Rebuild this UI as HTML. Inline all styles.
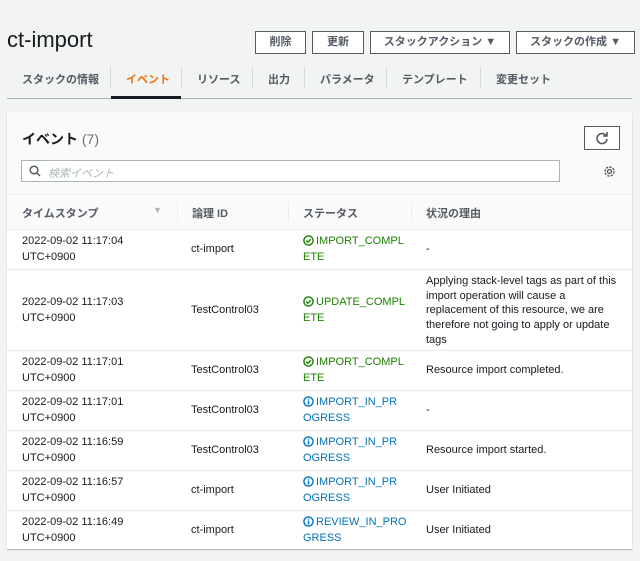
<!DOCTYPE html>
<html><head><meta charset="utf-8"><style>
*{box-sizing:border-box;margin:0;padding:0}
body{width:640px;height:561px;overflow:hidden;background:#f2f3f3;font-family:"Liberation Sans","Noto Sans CJK JP",sans-serif;color:#16191f;position:relative;font-size:11px}
.a{position:absolute;white-space:nowrap}
.btn{position:absolute;top:31px;height:23px;border:1px solid #545b64;background:#fff;font-weight:bold;font-size:11px;text-align:center;line-height:21px;color:#545b64}
.tab{position:absolute;top:71px;font-weight:bold;font-size:11px;color:#545b64}
.sep{position:absolute;top:67px;width:1px;height:22px;background:#d5dbdb}
.card{position:absolute;left:7px;top:112px;width:625px;height:437px;background:#fff;box-shadow:0 1px 1px rgba(0,22,40,.3)}
.hl{position:absolute;left:7px;width:625px;height:1px;background:#eaeded}
.g{color:#1d8102}.b{color:#0073bb}
.ts{line-height:16px}
.st{position:absolute;left:303px;line-height:16px;font-size:11px;white-space:nowrap}
.st svg{vertical-align:-2px;margin-right:2px}
</style></head><body>
<div class="a" style="left:7px;top:27px;font-size:22px">ct-import</div>
<div class="btn" style="left:255px;width:51px">削除</div>
<div class="btn" style="left:312px;width:52px">更新</div>
<div class="btn" style="left:370px;width:140px">スタックアクション ▼</div>
<div class="btn" style="left:516px;width:119px">スタックの作成 ▼</div>
<div class="tab" style="left:22px">スタックの情報</div>
<div class="sep" style="left:110px"></div>
<div class="tab" style="left:126px;color:#ec7211">イベント</div>
<div class="sep" style="left:181px"></div>
<div class="tab" style="left:197px">リソース</div>
<div class="sep" style="left:252px"></div>
<div class="tab" style="left:268px">出力</div>
<div class="sep" style="left:304px"></div>
<div class="tab" style="left:320px">パラメータ</div>
<div class="sep" style="left:386px"></div>
<div class="tab" style="left:402px">テンプレート</div>
<div class="sep" style="left:480px"></div>
<div class="tab" style="left:496px">変更セット</div>
<div class="a" style="left:7px;top:98px;width:625px;height:1px;background:#aab7b8"></div>
<div class="a" style="left:111px;top:96px;width:70px;height:3px;background:#16191f"></div>
<div class="card"></div>
<div class="a" style="left:7px;top:112px;width:625px;height:117px;background:#fafafa"></div>
<div class="a" style="left:22px;top:129px;font-size:14px;font-weight:bold">イベント <span style="font-weight:normal;color:#687078">(7)</span></div>
<div class="a" style="left:584px;top:126px;width:36px;height:24px;border:1px solid #545b64;background:#fff"><svg width="34" height="22" viewBox="0 0 34 22"><path d="M21 8.5A5 5 0 1 0 22 12" fill="none" stroke="#545b64" stroke-width="1.6"/><path d="M22 5v4h-4" fill="none" stroke="#545b64" stroke-width="1.6"/></svg></div>
<div class="a" style="left:21px;top:160px;width:539px;height:22px;border:1px solid #aab7b8;background:#fff"></div>
<svg class="a" style="left:29px;top:165px" width="12" height="12"><circle cx="5" cy="5" r="3.8" fill="none" stroke="#545b64" stroke-width="1.5"/><path d="M8 8l3 3" stroke="#545b64" stroke-width="1.5"/></svg>
<div class="a" style="left:48px;top:165px;color:#aab7b8;font-style:italic">検索イベント</div>
<svg class="a" style="left:603px;top:165px" width="13" height="13"><circle cx="6.5" cy="6.5" r="4.5" fill="none" stroke="#545b64" stroke-width="1.5" stroke-dasharray="2.2 1.3"/><circle cx="6.5" cy="6.5" r="2" fill="none" stroke="#545b64" stroke-width="1.3"/></svg>
<div class="hl" style="top:194px"></div>
<div class="a" style="left:22px;top:205px;font-weight:bold;color:#545b64">タイムスタンプ</div>
<div class="a" style="left:153px;top:205px;color:#aab7b8;font-size:9px">▼</div>
<div class="a" style="left:177px;top:202px;width:1px;height:19px;background:#eaeded"></div>
<div class="a" style="left:192px;top:205px;font-weight:bold;color:#545b64">論理 ID</div>
<div class="a" style="left:288px;top:202px;width:1px;height:19px;background:#eaeded"></div>
<div class="a" style="left:303px;top:205px;font-weight:bold;color:#545b64">ステータス</div>
<div class="a" style="left:411px;top:202px;width:1px;height:19px;background:#eaeded"></div>
<div class="a" style="left:426px;top:205px;font-weight:bold;color:#545b64">状況の理由</div>
<div class="hl" style="top:229px"></div>
<div class="hl" style="top:269px"></div>
<div class="hl" style="top:350px"></div>
<div class="hl" style="top:390px"></div>
<div class="hl" style="top:430px"></div>
<div class="hl" style="top:470px"></div>
<div class="hl" style="top:510px"></div>

<div class="a ts" style="left:22px;top:233px">2022-09-02 11:17:04<br>UTC+0900</div>
<div class="a" style="left:191px;top:243px">ct-import</div>
<div class="st g" style="top:233px"><svg width="11" height="11"><circle cx="5.5" cy="5.5" r="4.6" fill="none" stroke="#1d8102" stroke-width="1.4"/><path d="M3.2 5.6l1.6 1.6 3-3" fill="none" stroke="#1d8102" stroke-width="1.4"/></svg>IMPORT_COMPL<br>ETE</div>
<div class="a" style="left:426px;top:243px">-</div>

<div class="a ts" style="left:22px;top:294px">2022-09-02 11:17:03<br>UTC+0900</div>
<div class="a" style="left:191px;top:304px">TestControl03</div>
<div class="st g" style="top:294px"><svg width="11" height="11"><circle cx="5.5" cy="5.5" r="4.6" fill="none" stroke="#1d8102" stroke-width="1.4"/><path d="M3.2 5.6l1.6 1.6 3-3" fill="none" stroke="#1d8102" stroke-width="1.4"/></svg>UPDATE_COMPL<br>ETE</div>
<div class="a" style="left:426px;top:274px;line-height:14.7px">Applying stack-level tags as part of this<br>import operation will cause a<br>replacement of this resource, we are<br>therefore not going to apply or update<br>tags</div>

<div class="a ts" style="left:22px;top:354px">2022-09-02 11:17:01<br>UTC+0900</div>
<div class="a" style="left:191px;top:364px">TestControl03</div>
<div class="st g" style="top:354px"><svg width="11" height="11"><circle cx="5.5" cy="5.5" r="4.6" fill="none" stroke="#1d8102" stroke-width="1.4"/><path d="M3.2 5.6l1.6 1.6 3-3" fill="none" stroke="#1d8102" stroke-width="1.4"/></svg>IMPORT_COMPL<br>ETE</div>
<div class="a" style="left:426px;top:364px">Resource import completed.</div>

<div class="a ts" style="left:22px;top:394px">2022-09-02 11:17:01<br>UTC+0900</div>
<div class="a" style="left:191px;top:404px">TestControl03</div>
<div class="st b" style="top:394px"><svg width="11" height="11"><circle cx="5.5" cy="5.5" r="4.6" fill="none" stroke="#0073bb" stroke-width="1.4"/><path d="M5.5 4.5v4M5.5 2.5v1" stroke="#0073bb" stroke-width="1.4"/></svg>IMPORT_IN_PR<br>OGRESS</div>
<div class="a" style="left:426px;top:404px">-</div>

<div class="a ts" style="left:22px;top:434px">2022-09-02 11:16:59<br>UTC+0900</div>
<div class="a" style="left:191px;top:444px">TestControl03</div>
<div class="st b" style="top:434px"><svg width="11" height="11"><circle cx="5.5" cy="5.5" r="4.6" fill="none" stroke="#0073bb" stroke-width="1.4"/><path d="M5.5 4.5v4M5.5 2.5v1" stroke="#0073bb" stroke-width="1.4"/></svg>IMPORT_IN_PR<br>OGRESS</div>
<div class="a" style="left:426px;top:444px">Resource import started.</div>

<div class="a ts" style="left:22px;top:474px">2022-09-02 11:16:57<br>UTC+0900</div>
<div class="a" style="left:191px;top:484px">ct-import</div>
<div class="st b" style="top:474px"><svg width="11" height="11"><circle cx="5.5" cy="5.5" r="4.6" fill="none" stroke="#0073bb" stroke-width="1.4"/><path d="M5.5 4.5v4M5.5 2.5v1" stroke="#0073bb" stroke-width="1.4"/></svg>IMPORT_IN_PR<br>OGRESS</div>
<div class="a" style="left:426px;top:484px">User Initiated</div>

<div class="a ts" style="left:22px;top:514px">2022-09-02 11:16:49<br>UTC+0900</div>
<div class="a" style="left:191px;top:524px">ct-import</div>
<div class="st b" style="top:514px"><svg width="11" height="11"><circle cx="5.5" cy="5.5" r="4.6" fill="none" stroke="#0073bb" stroke-width="1.4"/><path d="M5.5 4.5v4M5.5 2.5v1" stroke="#0073bb" stroke-width="1.4"/></svg>REVIEW_IN_PRO<br>GRESS</div>
<div class="a" style="left:426px;top:524px">User Initiated</div>
</body></html>
